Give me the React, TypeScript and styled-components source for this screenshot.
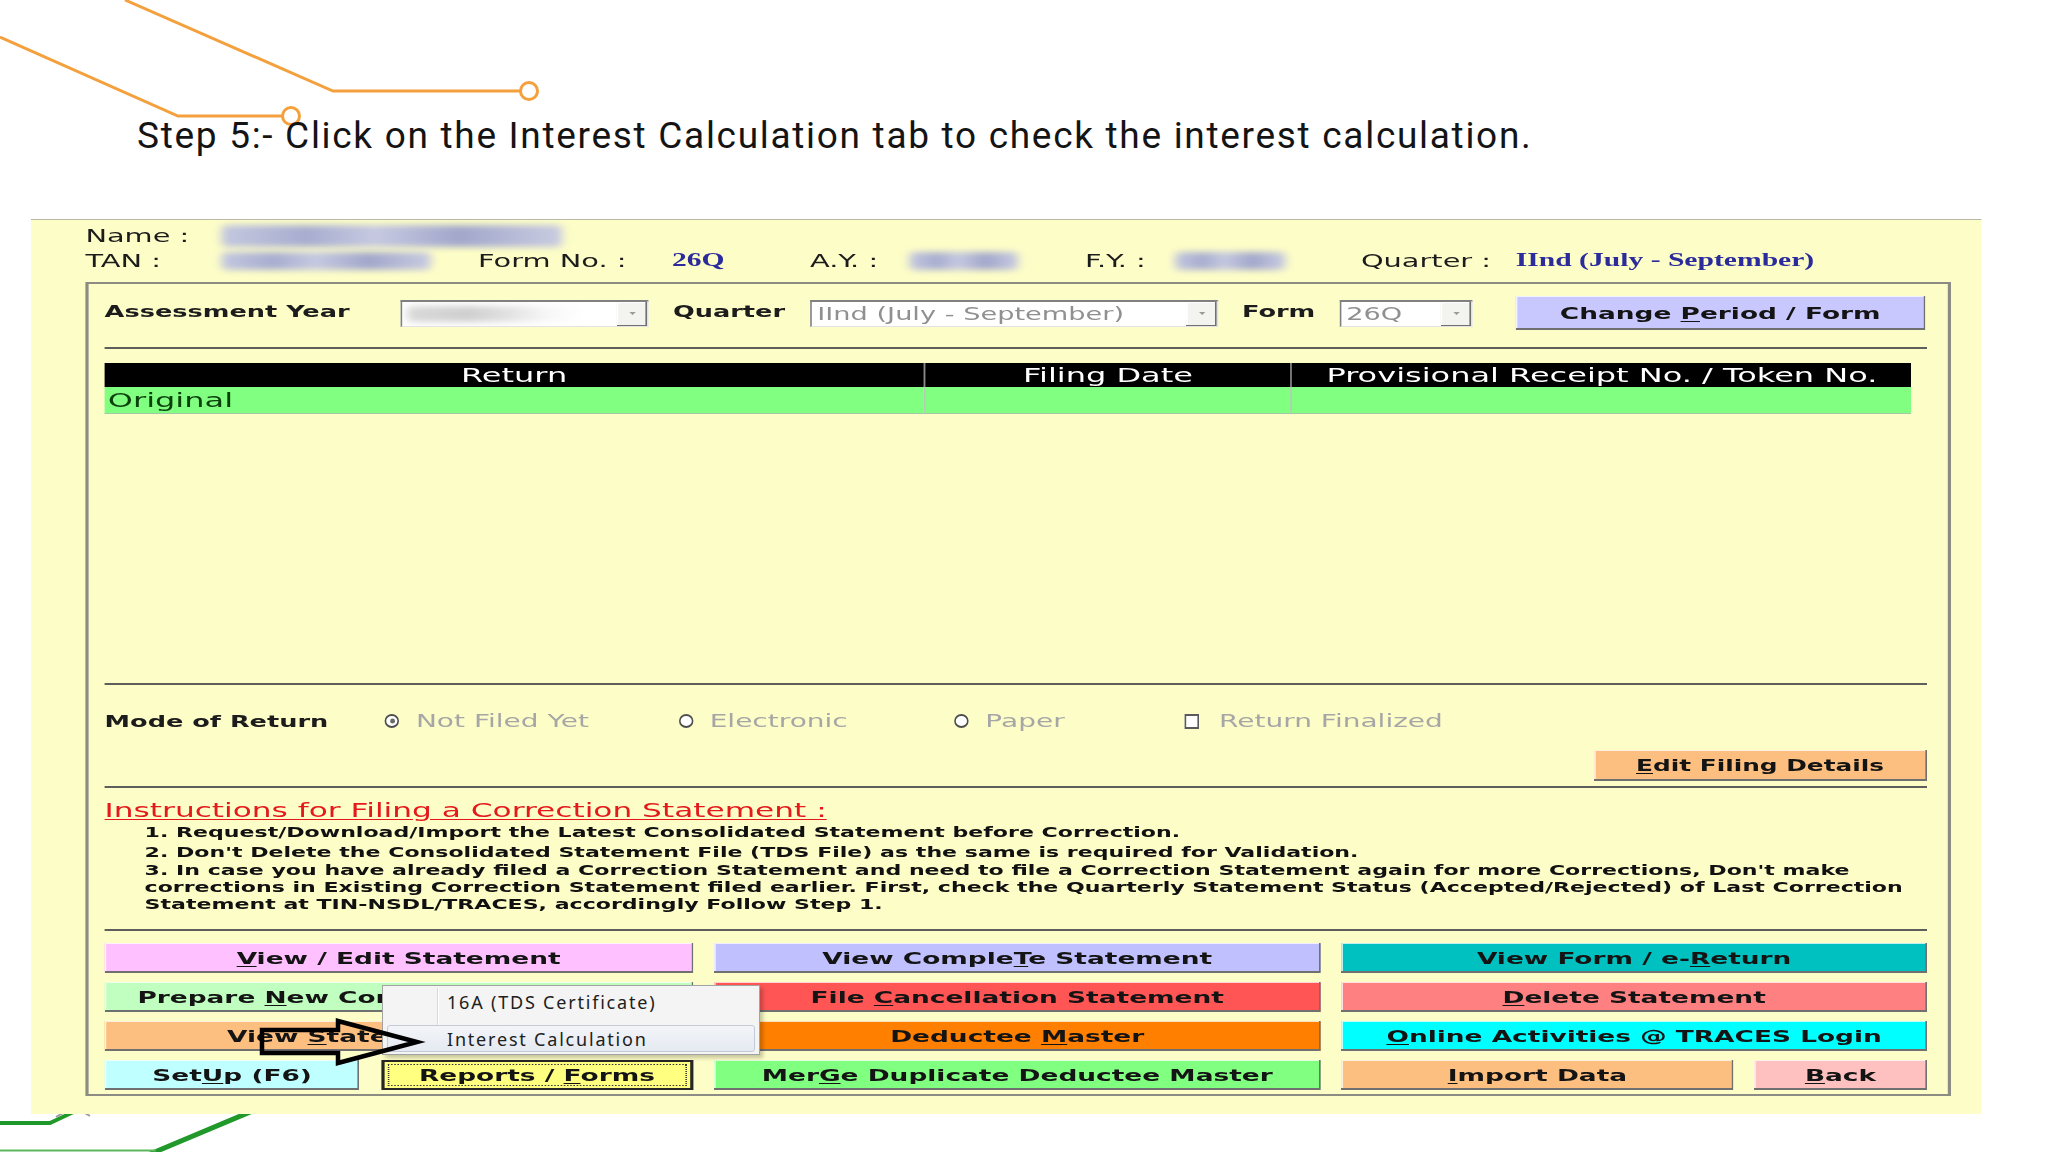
import styled, { createGlobalStyle } from 'styled-components';

// the desktop screenshot is wider than it is tall, so the whole window is stretched sideways
const STRETCH = 1.6;

const GlobalStyle = createGlobalStyle`
  html, body {
    margin: 0;
    padding: 0;
    background: #ffffff;
  }
  #root {
    width: 2048px;
    height: 1152px;
  }
`;

const Slide = styled.div`
  position: relative;
  width: 2048px;
  height: 1152px;
  overflow: hidden;
  background: #ffffff;
  display: flex;
  flex-direction: column;
`;

const Decor = styled.svg`
  position: absolute;
  left: 0;
  top: 0;
  z-index: 0;
  pointer-events: none;
`;

const Heading = styled.h1`
  position: relative;
  z-index: 1;
  margin: 114px 0 0 137px;
  height: 44px;
  line-height: 44px;
  font-family: Roboto, 'Liberation Sans', sans-serif;
  font-weight: 400;
  font-size: 37px;
  letter-spacing: 1.7px;
  color: #141414;
  white-space: nowrap;
`;

/* ---------- the application window ---------- */

const Screen = styled.div`
  position: relative;
  z-index: 1;
  align-self: flex-start;
  margin: 61px 0 0 31px;
  width: 1219px;
  box-sizing: border-box;
  padding: 3px 0 18px;
  background: #fdfdc8;
  border-top: 1px solid #b9b9a6;
  transform: scaleX(${STRETCH});
  transform-origin: left top;
  font-family: 'DejaVu Sans', Verdana, sans-serif;
  color: #1c1c1c;
`;

const InfoRow = styled.div`
  display: flex;
  align-items: center;
  height: 25px;
  padding-left: 34px;
  font-size: 18px;
`;

const InfoCell = styled.div<{ $w?: number }>`
  flex: 0 0 ${p => (p.$w ? `${p.$w}px` : 'auto')};
  display: flex;
  align-items: center;
  white-space: nowrap;
`;

const Smudge = styled.div<{ $w: number; $h?: number; $gray?: boolean }>`
  width: ${p => p.$w}px;
  height: ${p => p.$h ?? 18}px;
  border-radius: 4px;
  background: ${p =>
    p.$gray
      ? 'linear-gradient(90deg, #d9d9d9 0%, #cfcfcf 35%, #e4e4e4 60%, #f7f7f7 80%, #ffffff 100%)'
      : 'linear-gradient(90deg, #c4c8df 0%, #a8add0 25%, #c6c9e0 45%, #a2a7cb 70%, #c9cce1 100%)'};
  filter: blur(3px);
`;

const Accent = styled.span`
  font-family: 'Liberation Serif', 'DejaVu Serif', serif;
  font-weight: 700;
  font-size: 18.5px;
  color: #2b2b9c;
`;

const Frame = styled.div`
  margin: 9px 0 0 34px;
  width: 1165.65px;
  box-sizing: border-box;
  border: 2px solid #8c8c84;
  padding: 0 13px 4px 10px;
`;

const Controls = styled.div`
  display: flex;
  align-items: center;
  height: 34px;
  margin-top: 12px;
`;

const FieldLabel = styled.div<{ $w: number; $indent?: number }>`
  flex: 0 0 ${p => p.$w}px;
  box-sizing: border-box;
  padding-left: ${p => p.$indent ?? 0}px;
  margin-bottom: 3px;
  font-weight: 700;
  font-size: 16px;
  white-space: nowrap;
`;

const Combo = styled.div<{ $w: number }>`
  flex: 0 0 ${p => p.$w}px;
  height: 27px;
  box-sizing: border-box;
  display: flex;
  background: #ffffff;
  border-style: solid;
  border-width: 2px 1px 1px 1.5px;
  border-color: #808080 #e2e2e2 #e2e2e2 #808080;
`;

const ComboText = styled.div`
  flex: 1;
  display: flex;
  align-items: center;
  padding-left: 3px;
  overflow: hidden;
  white-space: nowrap;
  font-size: 17px;
  color: #909090;
`;

const ComboButton = styled.div`
  flex: 0 0 19px;
  display: flex;
  align-items: center;
  justify-content: center;
  background: #f3f3ef;
  box-shadow: inset -1px -1px 0 #707070, inset 1px 1px 0 #ffffff;

  &::after {
    content: '';
    width: 0;
    height: 0;
    border-left: 2.2px solid transparent;
    border-right: 2.2px solid transparent;
    border-top: 3px solid #9a9a9a;
  }
`;

const Key = styled.div<{ $bg: string; $h?: number; $size?: number; $focus?: boolean }>`
  position: relative;
  display: flex;
  align-items: center;
  justify-content: center;
  height: ${p => p.$h ?? 30}px;
  box-sizing: border-box;
  background: ${p => p.$bg};
  font-weight: 700;
  font-size: ${p => p.$size ?? 16.5}px;
  color: #141414;
  white-space: nowrap;
  overflow: hidden;
  box-shadow: ${p =>
    p.$focus ? 'none' : 'inset -1px -2px 0 #707070, inset 1px 1px 0 rgba(255, 255, 255, 0.75)'};
  border: ${p => (p.$focus ? '2px solid #262626' : 'none')};

  ${p =>
    p.$focus &&
    `
    &::after {
      content: '';
      position: absolute;
      inset: 2px;
      border: 1px dotted #3a3a3a;
    }
  `}

  u {
    text-underline-offset: 2px;
  }
`;

const Rule = styled.div<{ $mt: number }>`
  margin-top: ${p => p.$mt}px;
  border-top: 2px solid #5e5e5a;
`;

const Table = styled.div`
  margin-top: 14px;
  width: 1129.4px;
  display: grid;
  grid-template-columns: 511.9px 229.4px 388.1px;
  font-size: 20px;
`;

const HeadCell = styled.div<{ $first?: boolean }>`
  height: 24px;
  line-height: 24px;
  background: #000000;
  color: #ffffff;
  text-align: center;
  border-left: ${p => (p.$first ? 'none' : '1px solid #8a8a8a')};
`;

const BodyCell = styled.div<{ $first?: boolean }>`
  height: 27px;
  line-height: 26px;
  box-sizing: border-box;
  padding-left: 2px;
  background: #80ff80;
  color: #0b3f0b;
  border-left: ${p => (p.$first ? 'none' : '1px solid #b4ccb4')};
  border-bottom: 1px solid #a6c6a6;
`;

const ModeRow = styled.div`
  margin-top: 23px;
  height: 26px;
  display: flex;
  align-items: center;
`;

const ModeLabel = styled.div`
  flex: 0 0 175.4px;
  font-weight: 700;
  font-size: 16px;
  white-space: nowrap;
`;

const Choice = styled.div<{ $w?: number; $gap?: number }>`
  flex: 0 0 ${p => (p.$w ? `${p.$w}px` : 'auto')};
  display: flex;
  align-items: center;
  gap: ${p => p.$gap ?? 10.2}px;
  font-size: 17.5px;
  color: #a6a6a6;
  white-space: nowrap;
`;

const Radio = styled.span<{ $on?: boolean }>`
  position: relative;
  flex: 0 0 9px;
  height: 14px;
  box-sizing: border-box;
  border-radius: 50%;
  border-style: solid;
  border-width: 2.5px 1.6px;
  border-color: #4e4e4e;
  background: #ffffff;

  &::after {
    content: '';
    display: ${p => (p.$on ? 'block' : 'none')};
    position: absolute;
    left: 50%;
    top: 50%;
    width: 3px;
    height: 4.8px;
    border-radius: 50%;
    background: #6a6a6a;
    transform: translate(-50%, -50%);
  }
`;

const Tick = styled.span`
  flex: 0 0 8.75px;
  height: 15px;
  box-sizing: border-box;
  border-style: solid;
  border-width: 2px 1.3px;
  border-color: #5a5a5a;
  background: #ffffff;
`;

const EditRow = styled.div`
  margin-top: 16px;
  display: flex;
  justify-content: flex-end;
`;

const NotesTitle = styled.div`
  margin-top: 12px;
  height: 22px;
  line-height: 22px;
  font-size: 19.5px;
  color: #e3191c;
  text-decoration: underline;
  text-underline-offset: 2px;
  white-space: nowrap;
`;

const NoteLine = styled.div<{ $lh: number }>`
  padding-left: 25px;
  font-size: 13.8px;
  font-weight: 700;
  line-height: ${p => p.$lh}px;
  color: #111111;
  white-space: nowrap;
`;

const KeyGrid = styled.div`
  margin-top: 12px;
  display: grid;
  grid-template-columns: 367.5px 378.8px 1fr;
  grid-auto-rows: 30px;
  column-gap: 13.5px;
  row-gap: 9px;
`;

const KeyPair = styled.div<{ $first: number }>`
  display: grid;
  grid-template-columns: ${p => p.$first}px 1fr;
  column-gap: 13.5px;
`;

/* ---------- overlays drawn on top of the window ---------- */

const PopupMenu = styled.div`
  position: absolute;
  z-index: 3;
  left: 382px;
  top: 985px;
  width: 378px;
  height: 70px;
  box-sizing: border-box;
  padding: 1px 4px 2px;
  background: #f4f4f4;
  border: 1px solid #a3a3a3;
  box-shadow: 3px 3px 4px rgba(0, 0, 0, 0.22);
  font-family: 'Noto Sans', 'Open Sans', sans-serif;
  font-size: 18px;
  letter-spacing: 1.8px;
  color: #202020;

  &::before {
    content: '';
    position: absolute;
    left: 54px;
    top: 2px;
    bottom: 2px;
    width: 1px;
    background: #d9d9d9;
    box-shadow: 1px 0 0 #ffffff;
  }
`;

const MenuItem = styled.div<{ $active?: boolean }>`
  position: relative;
  height: ${p => (p.$active ? 27 : 30)}px;
  margin-top: ${p => (p.$active ? 8 : 0)}px;
  box-sizing: border-box;
  display: flex;
  align-items: center;
  padding-left: 59px;
  border-radius: 3px;
  border: 1px solid ${p => (p.$active ? '#c3c9d6' : 'transparent')};
  background: ${p => (p.$active ? 'linear-gradient(#f3f5f9, #e5e9f1)' : 'transparent')};
`;

const Pointer = styled.svg`
  position: absolute;
  z-index: 4;
  left: 250px;
  top: 1012px;
`;

export default function App() {
  return (
    <Slide>
      <GlobalStyle />
      <Decor width="2048" height="1152" viewBox="0 0 2048 1152">
        <path d="M0 37 L178 116 L282 116" stroke="#f3a03d" strokeWidth="3" fill="none" />
        <circle cx="291" cy="116" r="8.5" stroke="#f3a03d" strokeWidth="3" fill="#ffffff" />
        <path d="M125 0 L333 91 L520 91" stroke="#f3a03d" strokeWidth="3" fill="none" />
        <circle cx="529" cy="91" r="8.5" stroke="#f3a03d" strokeWidth="3" fill="#ffffff" />
        <path d="M0 1123 L50 1123 L84 1107" stroke="#21982a" strokeWidth="4" fill="none" />
        <path d="M150 1154 L262 1107" stroke="#21982a" strokeWidth="5" fill="none" />
        <path d="M0 1150.5 L156 1150.5" stroke="#5cb85c" strokeWidth="2" fill="none" />
        <path d="M56 1117 Q73 1105 90 1116" stroke="#9c9c9c" strokeWidth="2" fill="none" />
      </Decor>

      <Heading>Step 5:- Click on the Interest Calculation tab to check the interest calculation.</Heading>

      <Screen>
        <InfoRow>
          <InfoCell $w={85.4}>Name :</InfoCell>
          <InfoCell>
            <Smudge $w={212.5} $h={22} />
          </InfoCell>
        </InfoRow>
        <InfoRow>
          <InfoCell $w={85.4}>TAN :</InfoCell>
          <InfoCell $w={160}>
            <Smudge $w={130.6} />
          </InfoCell>
          <InfoCell $w={121.2}>Form No. :</InfoCell>
          <InfoCell $w={86.3}>
            <Accent>26Q</Accent>
          </InfoCell>
          <InfoCell $w={62.5}>A.Y. :</InfoCell>
          <InfoCell $w={109.35}>
            <Smudge $w={68} />
          </InfoCell>
          <InfoCell $w={56.25}>F.Y. :</InfoCell>
          <InfoCell $w={116.25}>
            <Smudge $w={69.4} />
          </InfoCell>
          <InfoCell $w={96.75}>Quarter :</InfoCell>
          <InfoCell>
            <Accent>IInd (July - September)</Accent>
          </InfoCell>
        </InfoRow>

        <Frame>
          <Controls>
            <FieldLabel $w={184.6}>Assessment Year</FieldLabel>
            <Combo $w={155.6}>
              <ComboText>
                <Smudge $w={110} $h={16} $gray />
              </ComboText>
              <ComboButton />
            </Combo>
            <FieldLabel $w={101.25} $indent={15}>
              Quarter
            </FieldLabel>
            <Combo $w={255}>
              <ComboText>IInd (July - September)</ComboText>
              <ComboButton />
            </Combo>
            <FieldLabel $w={75.6} $indent={14.4}>
              Form
            </FieldLabel>
            <Combo $w={83.1}>
              <ComboText>26Q</ComboText>
              <ComboButton />
            </Combo>
            <div style={{ flex: '0 0 26.5px' }} />
            <Key $bg="#c8c8ff" $h={34} style={{ flex: '0 0 256.25px' }}>
              <span>
                Change <u>P</u>eriod / Form
              </span>
            </Key>
          </Controls>

          <Rule $mt={17} />

          <Table>
            <HeadCell $first>Return</HeadCell>
            <HeadCell>Filing Date</HeadCell>
            <HeadCell>Provisional Receipt No. / Token No.</HeadCell>
            <BodyCell $first>Original</BodyCell>
            <BodyCell />
            <BodyCell />
          </Table>

          <Rule $mt={269} />

          <ModeRow>
            <ModeLabel>Mode of Return</ModeLabel>
            <Choice $w={183.6}>
              <Radio $on />
              Not Filed Yet
            </Choice>
            <Choice $w={172.3}>
              <Radio />
              Electronic
            </Choice>
            <Choice $w={144}>
              <Radio />
              Paper
            </Choice>
            <Choice $gap={12.5}>
              <Tick />
              Return Finalized
            </Choice>
          </ModeRow>

          <EditRow>
            <Key $bg="#fcbf80" $h={31} $size={15.5} style={{ width: '208px' }}>
              <span>
                <u>E</u>dit Filing Details
              </span>
            </Key>
          </EditRow>

          <Rule $mt={5} />

          <NotesTitle>Instructions for Filing a Correction Statement :</NotesTitle>
          <NoteLine $lh={20}>
            1. Request/Download/Import the Latest Consolidated Statement before Correction.
          </NoteLine>
          <NoteLine $lh={20}>
            2. Don't Delete the Consolidated Statement File (TDS File) as the same is required for Validation.
          </NoteLine>
          <NoteLine $lh={17}>
            3. In case you have already filed a Correction Statement and need to file a Correction Statement
            again for more Corrections, Don't make
          </NoteLine>
          <NoteLine $lh={17}>
            corrections in Existing Correction Statement filed earlier. First, check the Quarterly Statement
            Status (Accepted/Rejected) of Last Correction
          </NoteLine>
          <NoteLine $lh={17}>Statement at TIN-NSDL/TRACES, accordingly Follow Step 1.</NoteLine>

          <Rule $mt={16} />

          <KeyGrid>
            <Key $bg="#ffc0ff">
              <span>
                <u>V</u>iew / Edit Statement
              </span>
            </Key>
            <Key $bg="#c0c0ff">
              <span>
                View Comple<u>T</u>e Statement
              </span>
            </Key>
            <Key $bg="#00c0c0">
              <span>
                View Form / e-<u>R</u>eturn
              </span>
            </Key>

            <Key $bg="#c0ffc0">
              <span>
                Prepare <u>N</u>ew Correction Statement
              </span>
            </Key>
            <Key $bg="#ff5555">
              <span>
                File <u>C</u>ancellation Statement
              </span>
            </Key>
            <Key $bg="#ff8080">
              <span>
                <u>D</u>elete Statement
              </span>
            </Key>

            <Key $bg="#fcbf80">
              <span>
                View <u>S</u>tatement Status
              </span>
            </Key>
            <Key $bg="#ff8000">
              <span>
                Deductee <u>M</u>aster
              </span>
            </Key>
            <Key $bg="#00ffff">
              <span>
                <u>O</u>nline Activities @ TRACES Login
              </span>
            </Key>

            <KeyPair $first={159.4}>
              <Key $bg="#c0ffff">
                <span>
                  Set<u>U</u>p (F6)
                </span>
              </Key>
              <Key $bg="#ffff80" $focus>
                <span>
                  Reports / <u>F</u>orms
                </span>
              </Key>
            </KeyPair>
            <Key $bg="#80ff80">
              <span>
                Mer<u>G</u>e Duplicate Deductee Master
              </span>
            </Key>
            <KeyPair $first={244.4}>
              <Key $bg="#fcbf80">
                <span>
                  <u>I</u>mport Data
                </span>
              </Key>
              <Key $bg="#ffc0c0">
                <span>
                  <u>B</u>ack
                </span>
              </Key>
            </KeyPair>
          </KeyGrid>
        </Frame>
      </Screen>

      <PopupMenu>
        <MenuItem>16A (TDS Certificate)</MenuItem>
        <MenuItem $active>Interest Calculation</MenuItem>
      </PopupMenu>

      <Pointer width="180" height="60" viewBox="0 0 180 60">
        <polygon
          points="12,18 88,18 88,9 167,30 88,51 88,41 12,41"
          fill="none"
          stroke="#000000"
          strokeWidth="4.5"
          strokeLinejoin="miter"
        />
      </Pointer>
    </Slide>
  );
}
